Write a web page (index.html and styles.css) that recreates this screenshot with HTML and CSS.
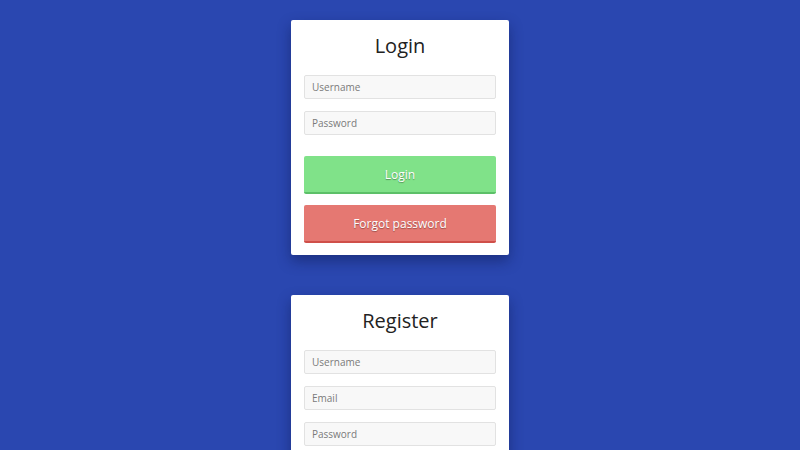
FILE: index.html
```html
<!DOCTYPE html>
<html>
<head>
<meta charset="utf-8">
<link rel="stylesheet" href="styles.css">
</head>
<body>
<div class="page">
  <form class="card">
    <h2 class="title">Login</h2>
    <input class="field" type="text" placeholder="Username">
    <input class="field" type="password" placeholder="Password">
    <button class="btn btn-green first-btn" type="button">Login</button>
    <button class="btn btn-red" type="button">Forgot password</button>
  </form>
  <form class="card">
    <h2 class="title">Register</h2>
    <input class="field" type="text" placeholder="Username">
    <input class="field" type="text" placeholder="Email">
    <input class="field" type="password" placeholder="Password">
  </form>
</div>
</body>
</html>
```
FILE: styles.css
```css
html, body {
  margin: 0;
  padding: 0;
  background: #2a47b0;
  font-family: "Open Sans", "Noto Sans", sans-serif;
  overflow: hidden;
}
.page {
  display: flex;
  flex-direction: column;
  align-items: center;
  gap: 40px;
  padding-top: 20px;
}
.card {
  width: 218px;
  box-sizing: border-box;
  background: #fff;
  border-radius: 2px;
  padding: 13px 13px 12px;
  display: flex;
  flex-direction: column;
  box-shadow: 0 6px 14px rgba(10, 20, 70, 0.45);
}
.title {
  margin: 0 0 16px;
  text-align: center;
  font-weight: 400;
  font-size: 20px;
  line-height: 26px;
  color: #222;
}
.field {
  height: 24px;
  box-sizing: border-box;
  margin: 0 0 12px;
  padding: 0 7px;
  border: 1px solid #e2e2e2;
  border-radius: 2px;
  background: #f8f8f8;
  font-family: inherit;
  font-size: 10px;
  color: #333;
  outline: none;
}
.field::placeholder {
  color: #7a7a7a;
}
.btn {
  height: 38px;
  border: none;
  border-radius: 2px;
  color: #fff;
  font-family: inherit;
  font-size: 12px;
  text-shadow: 0 1px 1px rgba(0, 0, 0, 0.35);
  margin: 0 0 11px;
  cursor: pointer;
}
.btn:last-child {
  margin-bottom: 0;
}
.first-btn {
  margin-top: 9px;
}
.btn-green {
  background: #80e289;
  border-bottom: 2px solid #5cc068;
}
.btn-red {
  background: #e57872;
  border-bottom: 2px solid #cf4f49;
}
```
